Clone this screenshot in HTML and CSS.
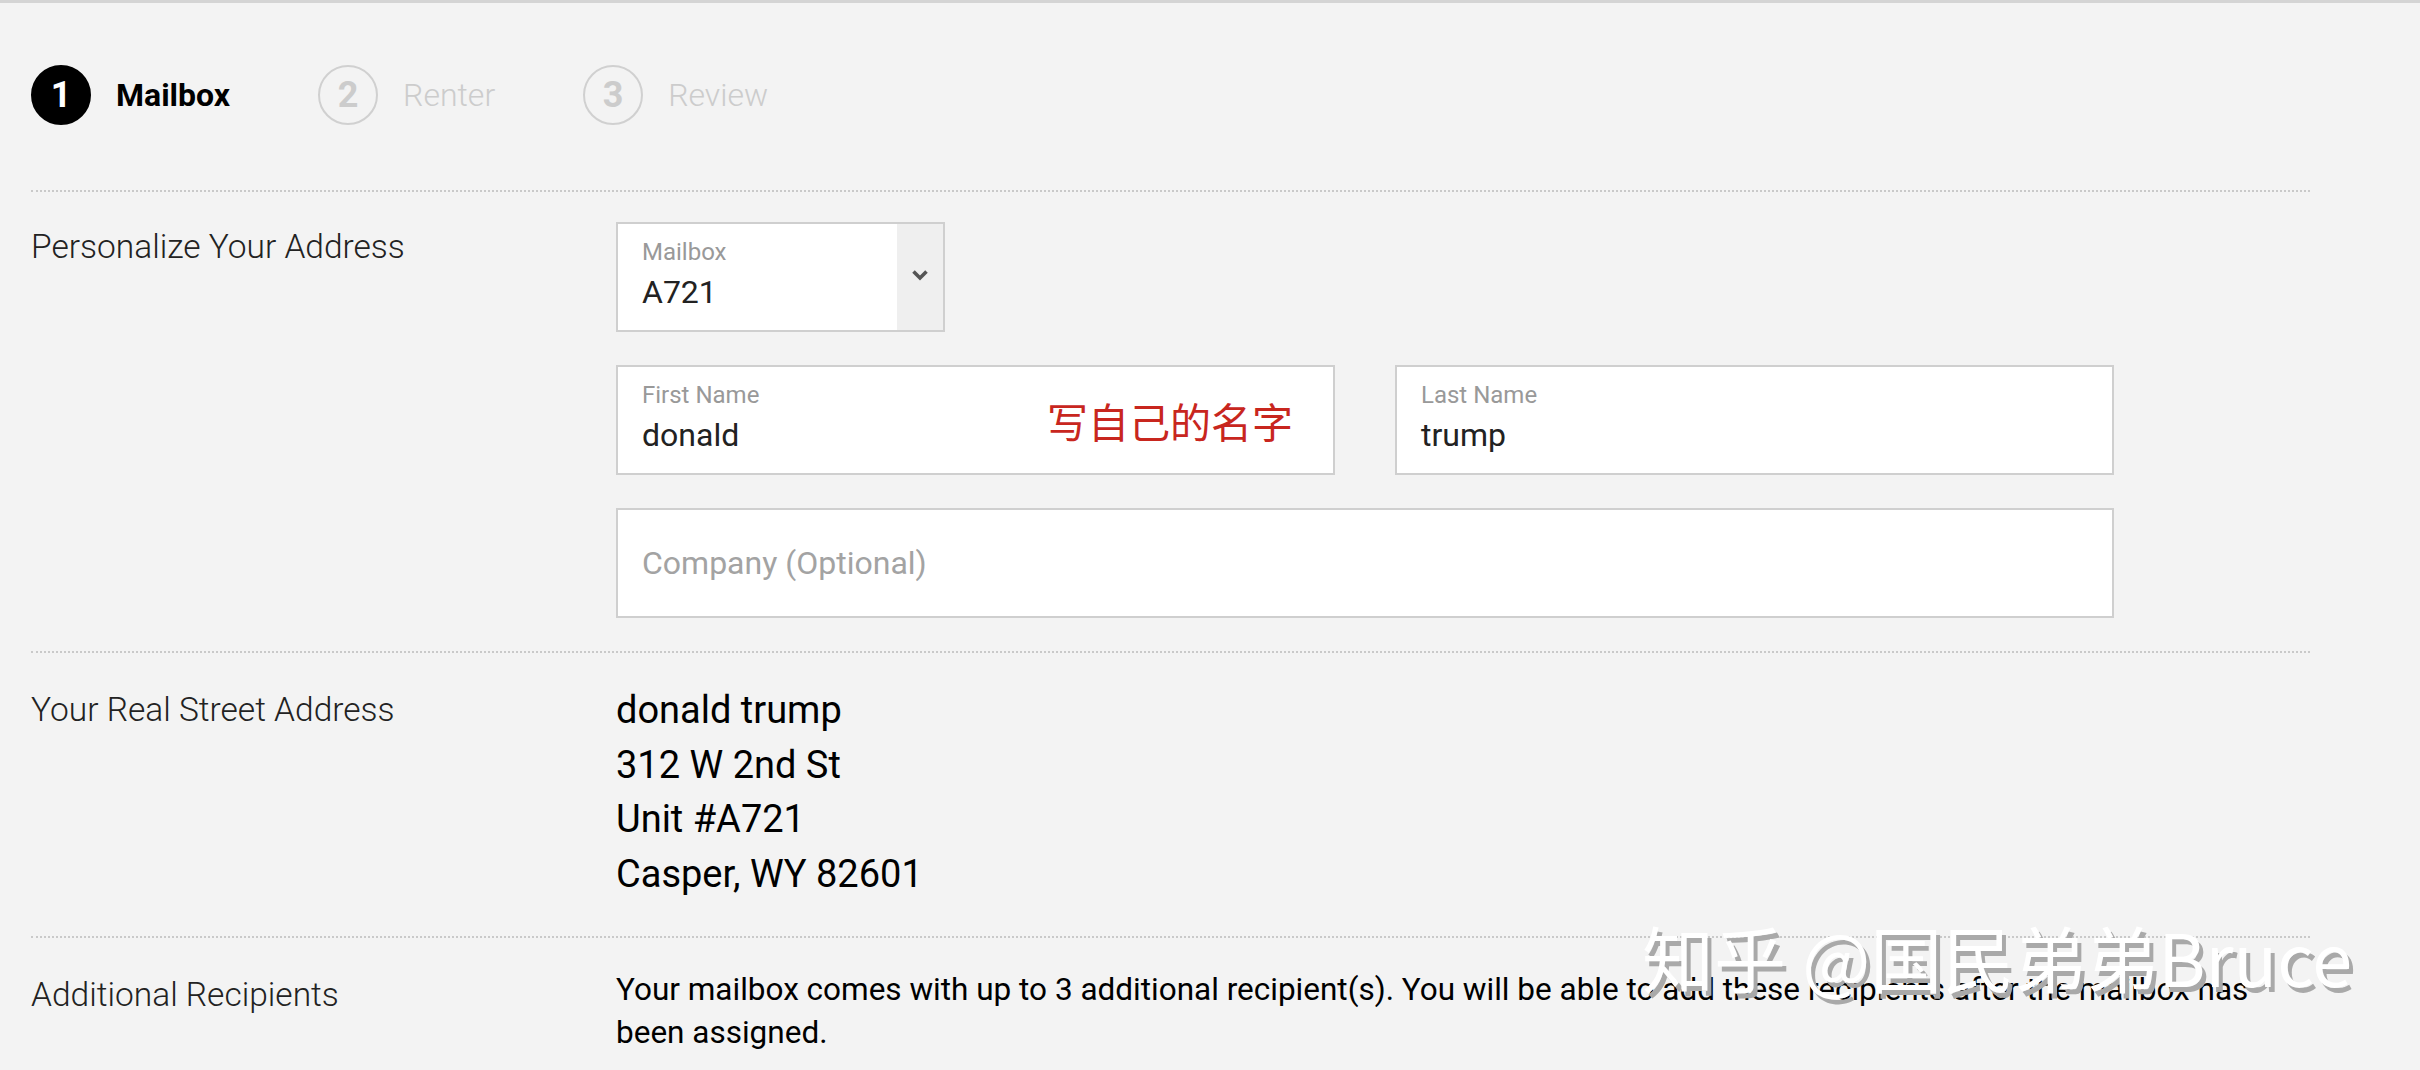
FILE: index.html
```
<!DOCTYPE html>
<html lang="en">
<head>
    <meta charset="UTF-8">
    <meta name="viewport" content="width=device-width, initial-scale=1.0">
    <title>Mailbox</title>

    <link rel="stylesheet" href="styles.css">
</head>
<body>
    <div class="page">
        <div class="steps">
            <div class="step active">
                <span class="step-num">1</span>
                <span class="step-name">Mailbox</span>
            </div>
            <div class="step">
                <span class="step-num">2</span>
                <span class="step-name">Renter</span>
            </div>
            <div class="step">
                <span class="step-num">3</span>
                <span class="step-name">Review</span>
            </div>
        </div>

        <div class="row">
            <h2 class="row-title">Personalize Your Address</h2>
            <div class="fields">
                <div class="field select-field">
                    <div class="field-text">
                        <span class="field-label">Mailbox</span>
                        <span class="field-value">A721</span>
                    </div>
                    <span class="select-arrow">
                        <svg width="18" height="12" viewBox="0 0 18 12"><path d="M2.5 2.5 L9 9 L15.5 2.5" fill="none" stroke="#555" stroke-width="3.6"/></svg>
                    </span>
                </div>
                <div class="field-pair">
                    <div class="field">
                        <div class="field-text">
                            <span class="field-label">First Name</span>
                            <span class="field-value">donald</span>
                        </div>
                        <span class="note">写自己的名字</span>
                    </div>
                    <div class="field">
                        <div class="field-text">
                            <span class="field-label">Last Name</span>
                            <span class="field-value">trump</span>
                        </div>
                    </div>
                </div>
                <div class="field empty-field">
                    <span class="placeholder">Company (Optional)</span>
                </div>
            </div>
        </div>

        <div class="row">
            <h2 class="row-title">Your Real Street Address</h2>
            <div class="address">
                donald trump<br>
                312 W 2nd St<br>
                Unit #A721<br>
                Casper, WY 82601
            </div>
        </div>

        <div class="row">
            <h2 class="row-title">Additional Recipients</h2>
            <p class="info">Your mailbox comes with up to 3 additional recipient(s). You will be able to add these recipients after the mailbox has been assigned.</p>
        </div>

        <div class="watermark">知乎 @国民弟弟Bruce</div>
    </div>
</body>
</html>
```

FILE: styles.css
```
body{
    margin: 0;
    background-color: #f3f3f3;
    border-top: 3px solid #d4d4d4;
    font-family: Roboto, "Noto Sans", sans-serif;
    color: #222;
    overflow: hidden;
}
.page{
    position: relative;
    padding-left: 31px;
    width: 2279px;
}

/* steps */
.steps{
    display: flex;
    align-items: center;
    padding-top: 62px;
    height: 60px;
    padding-bottom: 65px;
}
.step{
    display: flex;
    align-items: center;
    gap: 25px;
    margin-right: 88px;
    color: #ccc;
}
.step-num{
    width: 56px;
    height: 56px;
    border: 2px solid #d0d0d0;
    border-radius: 50%;
    display: flex;
    justify-content: center;
    align-items: center;
    font-size: 36px;
    font-weight: 700;
}
.step-name{
    font-size: 32px;
    font-weight: 300;
}
.step.active{
    color: #000;
}
.step.active .step-num{
    background-color: #000;
    border-color: #000;
    color: #fff;
}
.step.active .step-name{
    font-weight: 700;
}

/* rows */
.row{
    display: grid;
    grid-template-columns: 585px 1fr;
    border-top: 2px dotted #c9c9c9;
    padding: 30px 0 33px;
}
.row-title{
    margin: 0;
    font-size: 33.5px;
    font-weight: 300;
    line-height: 50px;
    color: #222;
}

.fields{
    display: flex;
    flex-direction: column;
    gap: 33px;
    width: 1498px;
}
.field-pair{
    display: flex;
    gap: 60px;
}
.field-pair .field{
    flex: 1;
}
.field{
    display: flex;
    align-items: center;
    height: 106px;
    background-color: #fff;
    border: 2px solid #cfcfcf;
}
.field-text{
    display: flex;
    flex-direction: column;
    padding-left: 24px;
    flex: 1;
}
.field-label{
    font-size: 24px;
    line-height: 30px;
    color: #999;
}
.field-value{
    font-size: 32px;
    line-height: 50px;
    color: #222;
}
.select-field{
    width: 325px;
}
.select-arrow{
    align-self: stretch;
    width: 46px;
    background-color: #efefef;
    display: flex;
    justify-content: center;
    align-items: center;
    padding-bottom: 4px;
}
.note{
    margin-right: 40px;
    font-family: "Noto Sans CJK SC", sans-serif;
    font-size: 41px;
    color: #c8261e;
}
.placeholder{
    padding-left: 24px;
    font-size: 32px;
    color: #a3a3a3;
}

.address{
    font-size: 38px;
    line-height: 54.5px;
    color: #000;
    padding-bottom: 2px;
}
.row:nth-child(3) .row-title{
    line-height: 54px;
}
.info{
    margin: 0;
    max-width: 1672px;
    font-size: 31.5px;
    line-height: 43px;
    color: #000;
}
.row:nth-child(4) .row-title{
    line-height: 54px;
}

.watermark{
    position: absolute;
    left: 1642px;
    top: 900px;
    font-family: "Noto Sans CJK SC", "Liberation Sans", sans-serif;
    font-size: 72px;
    color: #fff;
    text-shadow: 4px 5px 0 #a9a9a9;
    white-space: nowrap;
}
```
